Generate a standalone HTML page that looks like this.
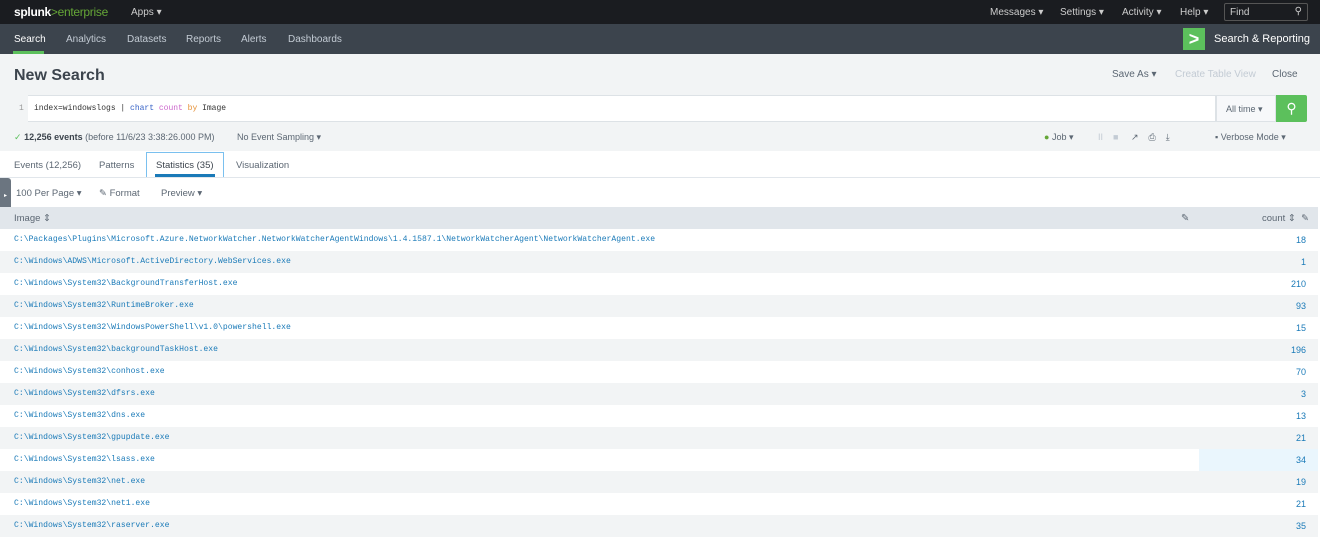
<!DOCTYPE html><html><head><style>
*{margin:0;padding:0;box-sizing:border-box}
body{width:1320px;height:544px;overflow:hidden;font-family:"Liberation Sans",sans-serif;background:#fff;position:relative;font-size:10px;color:#3c444d}
.a{position:absolute;white-space:nowrap}
.top{left:0;top:0;width:1320px;height:24px;background:#1a1c20;color:#ccc}
.nav{left:0;top:24px;width:1320px;height:30px;background:#3c444d;color:#c3cbd4}
.grey{left:0;top:54px;width:1320px;height:97px;background:#f2f4f5}
.mono{font-family:"Liberation Mono",monospace}
.row{position:absolute;left:0;width:1318px;height:22px;line-height:22px;font-family:"Liberation Mono",monospace;font-size:8.1px;color:#1a7ab8}
.row span{position:absolute;left:14px}
.row b{position:absolute;right:12px;font-weight:normal;font-family:"Liberation Sans",sans-serif;font-size:9px}
</style></head><body>
<div class="a top">
<div class="a" style="left:14px;top:5px;font-size:12px;color:#fff;font-weight:bold;letter-spacing:-.3px">splunk<span style="color:#65a637;font-weight:normal">&gt;enterprise</span></div>
<div class="a" style="left:131px;top:7px;font-size:10px">Apps ▾</div>
<div class="a" style="left:990px;top:7px">Messages ▾</div>
<div class="a" style="left:1060px;top:7px">Settings ▾</div>
<div class="a" style="left:1122px;top:7px">Activity ▾</div>
<div class="a" style="left:1180px;top:7px">Help ▾</div>
<div class="a" style="left:1224px;top:3px;width:84px;height:18px;border:1px solid #555;border-radius:2px;padding:3px 5px">Find<span style="position:absolute;right:5px;top:2px">⚲</span></div>
</div>
<div class="a nav">
<div class="a" style="left:14px;top:10px;color:#fff">Search</div>
<div class="a" style="left:13px;top:27px;width:31px;height:3px;background:#5cc05c"></div>
<div class="a" style="left:66px;top:10px">Analytics</div>
<div class="a" style="left:127px;top:10px">Datasets</div>
<div class="a" style="left:186px;top:10px">Reports</div>
<div class="a" style="left:241px;top:10px">Alerts</div>
<div class="a" style="left:288px;top:10px">Dashboards</div>
<div class="a" style="left:1183px;top:4px;width:22px;height:22px;background:#5cc05c;color:#fff;font-size:18px;text-align:center;line-height:22px;font-weight:bold">&gt;</div>
<div class="a" style="left:1214px;top:9px;color:#fff;font-size:11px">Search &amp; Reporting</div>
</div>
<div class="a grey"></div>
<div class="a" style="left:14px;top:67px;font-size:16px;font-weight:bold;color:#3c444d">New Search</div>
<div class="a" style="left:1112px;top:69px;color:#5c6773">Save As ▾</div>
<div class="a" style="left:1175px;top:69px;color:#c3cbd4">Create Table View</div>
<div class="a" style="left:1272px;top:69px;color:#5c6773">Close</div>
<div class="a" style="left:13px;top:95px;width:1203px;height:27px;background:#fff;border:1px solid #dde2e6"></div>
<div class="a" style="left:13px;top:95px;width:15px;height:27px;background:#f2f4f5"></div>
<div class="a mono" style="left:19px;top:104px;font-size:8px;color:#999">1</div>
<div class="a mono" style="left:34px;top:104px;font-size:8px;color:#333">index=windowslogs | <span style="color:#3863c7">chart</span> <span style="color:#c6c">count</span> <span style="color:#e69138">by</span> Image</div>
<div class="a" style="left:1216px;top:95px;width:60px;height:27px;background:#f7f8fa;border:1px solid #dde2e6;padding:8px 9px;color:#5c6773;font-size:9px">All time ▾</div>
<div class="a" style="left:1276px;top:95px;width:31px;height:27px;background:#5cc05c;border-radius:0 2px 2px 0;color:#fff;text-align:center;font-size:14px;line-height:27px">⚲</div>
<div class="a" style="left:14px;top:132px;color:#5c6773;font-size:9px"><span style="color:#5cc05c">✓</span> <b style="color:#3c444d">12,256 events</b> (before 11/6/23 3:38:26.000 PM)</div>
<div class="a" style="left:237px;top:132px;color:#5c6773;font-size:9px">No Event Sampling ▾</div>
<div class="a" style="left:1044px;top:132px;color:#5c6773;font-size:9px"><span style="color:#65a637">●</span> Job ▾</div>
<div class="a" style="left:1098px;top:132px;color:#c3cbd4;font-size:9px">II &nbsp;&nbsp;&nbsp;■ &nbsp;&nbsp;&nbsp;&nbsp;<span style="color:#5c6773">↗ &nbsp;&nbsp;&nbsp;⎙ &nbsp;&nbsp;&nbsp;⤓</span></div>
<div class="a" style="left:1215px;top:132px;color:#5c6773;font-size:9px">▪ Verbose Mode ▾</div>
<div class="a" style="left:0;top:177px;width:1320px;height:1px;background:#e1e6eb"></div>
<div class="a" style="left:14px;top:160px;color:#5c6773;font-size:9.5px">Events (12,256)</div>
<div class="a" style="left:99px;top:160px;color:#5c6773;font-size:9.5px">Patterns</div>
<div class="a" style="left:146px;top:152px;width:78px;height:25px;border:1px solid #7ac0ef;border-bottom:none;background:#fff"></div>
<div class="a" style="left:156px;top:160px;color:#3c444d;font-size:9.5px">Statistics (35)</div>
<div class="a" style="left:155px;top:174px;width:60px;height:3px;background:#1a7ab8"></div>
<div class="a" style="left:236px;top:160px;color:#5c6773;font-size:9.5px">Visualization</div>
<div class="a" style="left:0;top:178px;width:11px;height:36px;background:#6b7580;border-radius:0 3px 3px 0;color:#fff;font-size:6px;line-height:36px;text-align:center">▸</div>
<div class="a" style="left:16px;top:188px;color:#5c6773;font-size:9.5px">100 Per Page ▾</div>
<div class="a" style="left:99px;top:188px;color:#5c6773;font-size:9.5px">✎ Format</div>
<div class="a" style="left:161px;top:188px;color:#5c6773;font-size:9.5px">Preview ▾</div>
<div class="a" style="left:0;top:207px;width:1318px;height:22px;background:#e1e6eb"></div>
<div class="a" style="left:14px;top:213px;color:#5c6773;font-size:9.5px">Image ⇕</div>
<div class="a" style="left:1181px;top:213px;color:#5c6773">✎</div>
<div class="a" style="left:1262px;top:213px;color:#5c6773;font-size:9.5px">count ⇕ &nbsp;✎</div>
<div class="row" style="top:229px"><span>C:\Packages\Plugins\Microsoft.Azure.NetworkWatcher.NetworkWatcherAgentWindows\1.4.1587.1\NetworkWatcherAgent\NetworkWatcherAgent.exe</span><b>18</b></div>
<div class="row" style="top:251px;background:#f2f4f5"><span>C:\Windows\ADWS\Microsoft.ActiveDirectory.WebServices.exe</span><b>1</b></div>
<div class="row" style="top:273px"><span>C:\Windows\System32\BackgroundTransferHost.exe</span><b>210</b></div>
<div class="row" style="top:295px;background:#f2f4f5"><span>C:\Windows\System32\RuntimeBroker.exe</span><b>93</b></div>
<div class="row" style="top:317px"><span>C:\Windows\System32\WindowsPowerShell\v1.0\powershell.exe</span><b>15</b></div>
<div class="row" style="top:339px;background:#f2f4f5"><span>C:\Windows\System32\backgroundTaskHost.exe</span><b>196</b></div>
<div class="row" style="top:361px"><span>C:\Windows\System32\conhost.exe</span><b>70</b></div>
<div class="row" style="top:383px;background:#f2f4f5"><span>C:\Windows\System32\dfsrs.exe</span><b>3</b></div>
<div class="row" style="top:405px"><span>C:\Windows\System32\dns.exe</span><b>13</b></div>
<div class="row" style="top:427px;background:#f2f4f5"><span>C:\Windows\System32\gpupdate.exe</span><b>21</b></div>
<div class="row" style="top:449px;background:linear-gradient(90deg,#fff 1199px,#eaf6fd 1199px)"><span>C:\Windows\System32\lsass.exe</span><b>34</b></div>
<div class="row" style="top:471px;background:#f2f4f5"><span>C:\Windows\System32\net.exe</span><b>19</b></div>
<div class="row" style="top:493px"><span>C:\Windows\System32\net1.exe</span><b>21</b></div>
<div class="row" style="top:515px;background:#f2f4f5"><span>C:\Windows\System32\raserver.exe</span><b>35</b></div>
<div class="a" style="left:0;top:537px;width:1320px;height:7px;background:#fff"></div>
</body></html>
